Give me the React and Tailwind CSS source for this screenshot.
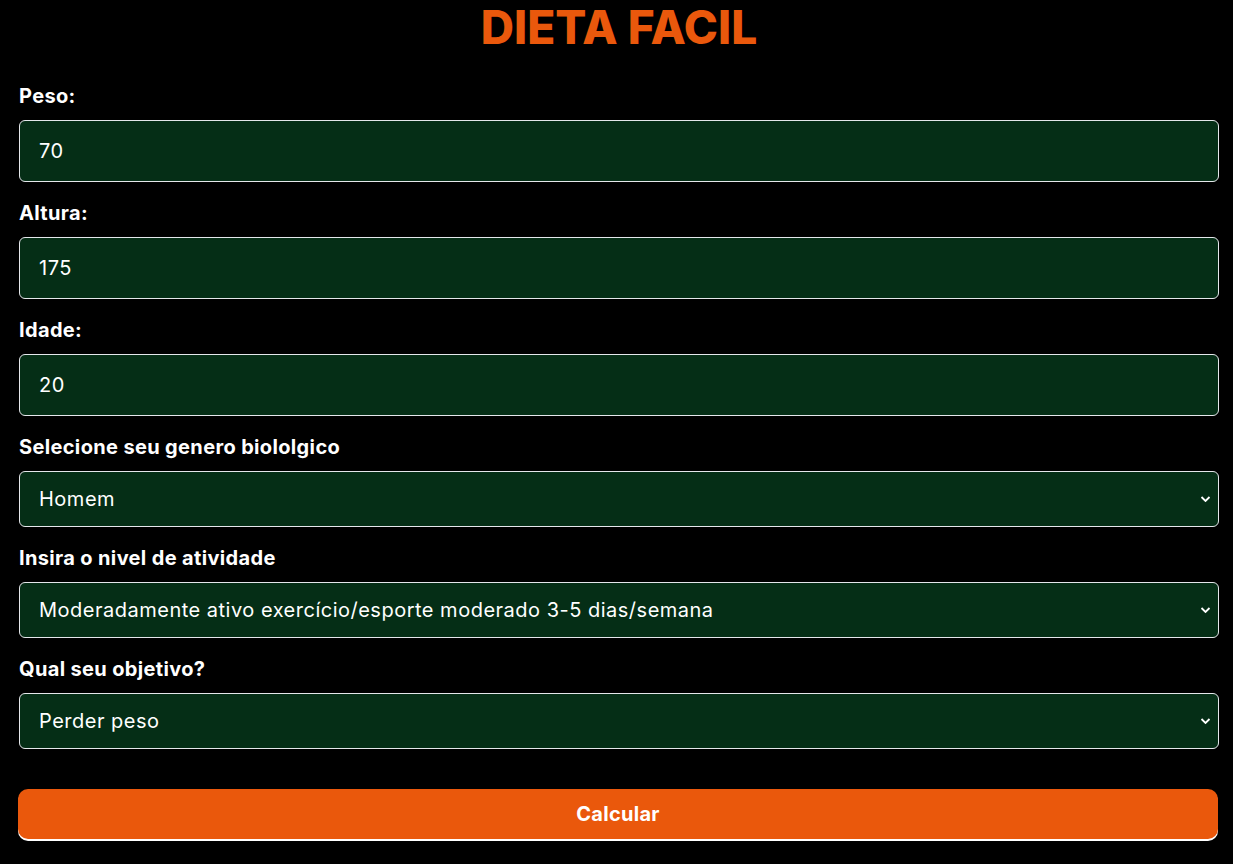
import { useState } from "react";

const chevron = (
  <svg
    className="pointer-events-none absolute right-[8px] top-1/2 -translate-y-1/2"
    width="11"
    height="7"
    viewBox="0 0 11 7"
    fill="none"
  >
    <path d="M1.5 1.5 5.5 5.5 9.5 1.5" stroke="#fff" strokeWidth="1.8" />
  </svg>
);

function Field({ label, value, onChange }) {
  return (
    <div className="flex flex-col">
      <label className="text-[20px] leading-[24px] font-bold tracking-[0.35px] text-white">{label}</label>
      <input
        type="number"
        value={value}
        onChange={(e) => onChange(e.target.value)}
        className="mt-[12px] h-[62px] w-full rounded-md border border-gray-200 bg-[#052e16] px-[19px] text-[20px] tracking-[0.5px] text-white outline-none"
      />
    </div>
  );
}

function Select({ label, value, onChange, options }) {
  return (
    <div className="flex flex-col">
      <label className="text-[20px] leading-[24px] font-bold tracking-[0.35px] text-white">{label}</label>
      <div className="relative mt-[12px]">
        <select
          value={value}
          onChange={(e) => onChange(e.target.value)}
          className="h-[56px] w-full appearance-none rounded-md border border-gray-200 bg-[#052e16] px-[19px] text-[20px] tracking-[0.5px] text-white outline-none"
        >
          {options.map((o) => (
            <option key={o} value={o}>
              {o}
            </option>
          ))}
        </select>
        {chevron}
      </div>
    </div>
  );
}

export default function App() {
  const [peso, setPeso] = useState("70");
  const [altura, setAltura] = useState("175");
  const [idade, setIdade] = useState("20");
  const [genero, setGenero] = useState("Homem");
  const [atividade, setAtividade] = useState(
    "Moderadamente ativo exercício/esporte moderado 3-5 dias/semana"
  );
  const [objetivo, setObjetivo] = useState("Perder peso");

  return (
    <div
      className="min-h-screen bg-black pl-[19px] pr-[14px] pt-[3px]"
      style={{ fontFamily: "Inter, 'Noto Sans', sans-serif" }}
    >
      <h1 className="text-center text-[46px] leading-[48px] font-extrabold text-[#ea580c]">
        DIETA FACIL
      </h1>

      <form className="mt-[33px] flex flex-col gap-[19px]" onSubmit={(e) => e.preventDefault()}>
        <Field label="Peso:" value={peso} onChange={setPeso} />
        <Field label="Altura:" value={altura} onChange={setAltura} />
        <Field label="Idade:" value={idade} onChange={setIdade} />
        <Select
          label="Selecione seu genero biololgico"
          value={genero}
          onChange={setGenero}
          options={["Homem", "Mulher"]}
        />
        <Select
          label="Insira o nivel de atividade"
          value={atividade}
          onChange={setAtividade}
          options={[
            "Sedentário pouco ou nenhum exercício",
            "Levemente ativo exercício leve 1-3 dias/semana",
            "Moderadamente ativo exercício/esporte moderado 3-5 dias/semana",
            "Muito ativo exercício intenso 6-7 dias/semana",
          ]}
        />
        <Select
          label="Qual seu objetivo?"
          value={objetivo}
          onChange={setObjetivo}
          options={["Perder peso", "Manter peso", "Ganhar peso"]}
        />

        <button
          type="submit"
          className="mt-[21px] h-[50px] w-full -ml-[1px] rounded-[10px] bg-[#ea580c] text-[20px] font-bold tracking-[0.3px] text-white shadow-[0_2px_0_#fff]"
        >
          Calcular
        </button>
      </form>
    </div>
  );
}
